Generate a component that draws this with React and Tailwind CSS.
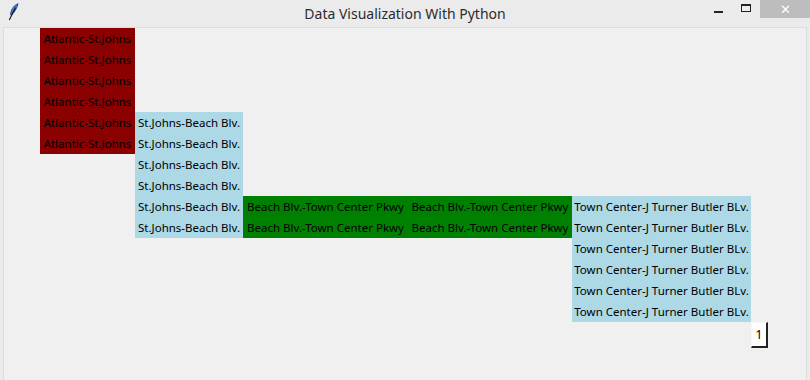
import React from "react";

const font = { fontFamily: '"Noto Sans", "Open Sans", sans-serif' };

function Cell({ text, className }) {
  return (
    <div
      className={`h-[21px] flex items-center justify-center whitespace-nowrap text-[11.5px] text-black leading-none ${className}`}
    >
      {text}
    </div>
  );
}

function Feather() {
  return (
    <svg width="11" height="18" viewBox="0 0 11 18">
      <path d="M10 0.8 C6.5 2 3.6 5.5 2.6 10.5 L3 12.5 C5.5 10.5 8.8 6 10 0.8 Z" fill="#3f86e8" stroke="#1b3a80" strokeWidth="0.9" />
      <path d="M7.5 4.5 L1.3 17" stroke="#111" strokeWidth="1.1" />
    </svg>
  );
}

export default function App() {
  const rows = [0, 1, 2, 3, 4, 5];

  return (
    <div className="w-[810px] h-[380px] bg-[#ebebeb] flex flex-col overflow-hidden" style={font}>
      {/* TITLE BAR */}
      <div className="h-[27px] grid grid-cols-[1fr_auto_1fr] shrink-0">
        <div className="pl-[8px] pt-[3px]">
          <Feather />
        </div>
        <div className="text-center text-[14px] text-[#2b2b2b] pt-[3px]">
          Data Visualization With Python
        </div>
        <div className="flex justify-end items-start">
          <div className="w-[28px] h-[18px] flex items-center justify-center">
            <div className="w-[9px] h-[2px] bg-[#222] mt-[6px]" />
          </div>
          <div className="w-[28px] h-[18px] flex items-center justify-center">
            <div className="w-[10px] h-[8px] border border-[#222] border-t-2 mb-[2px]" />
          </div>
          <div className="w-[50px] h-[18px] bg-[#bdbdbd] flex items-center justify-center text-white text-[13px] leading-none">
            ✕
          </div>
        </div>
      </div>

      {/* CONTENT */}
      <div className="flex-1 mx-[3px] border border-b-0 border-[#dcdcdc] bg-[#f0f0f0]">
        <div className="ml-[36px] grid grid-cols-[95px_108px_165px_164px_179px_17px] grid-rows-[repeat(14,21px)_26px]">
          {rows.map((r) => (
            <div key={"a" + r} className="col-start-1" style={{ gridRowStart: r + 1 }}>
              <Cell text="Atlantic-St.Johns" className="bg-[#8b0000]" />
            </div>
          ))}
          {rows.map((r) => (
            <div key={"b" + r} className="col-start-2" style={{ gridRowStart: r + 5 }}>
              <Cell text="St.Johns-Beach Blv." className="bg-[#add8e6]" />
            </div>
          ))}
          {[0, 1].map((r) => (
            <div key={"c" + r} className="col-start-3" style={{ gridRowStart: r + 9 }}>
              <Cell text="Beach Blv.-Town Center Pkwy" className="bg-[#008000]" />
            </div>
          ))}
          {[0, 1].map((r) => (
            <div key={"d" + r} className="col-start-4" style={{ gridRowStart: r + 9 }}>
              <Cell text="Beach Blv.-Town Center Pkwy" className="bg-[#008000]" />
            </div>
          ))}
          {rows.map((r) => (
            <div key={"e" + r} className="col-start-5" style={{ gridRowStart: r + 9 }}>
              <Cell text="Town Center-J Turner Butler BLv." className="bg-[#add8e6]" />
            </div>
          ))}
          <div className="col-start-6 row-start-[15]">
            <button className="w-[17px] h-[26px] bg-white text-[12px] text-black leading-none border-t border-l border-[#f8f8f8] border-r-2 border-b-2 border-r-[#222] border-b-[#222] flex items-center justify-center">
              1
            </button>
          </div>
        </div>
      </div>
    </div>
  );
}
